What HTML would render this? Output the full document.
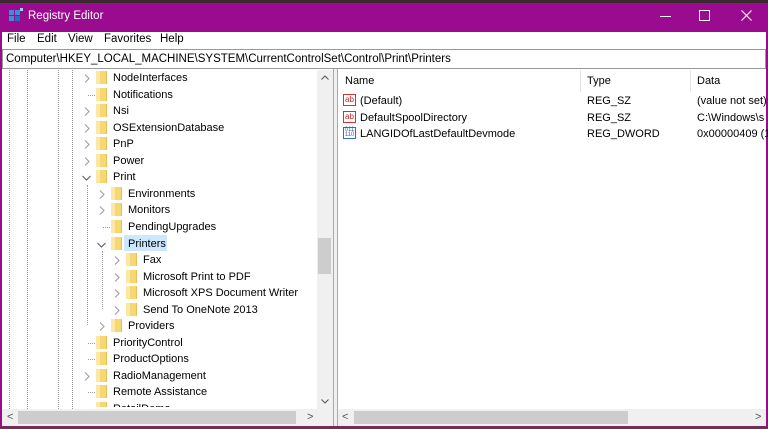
<!DOCTYPE html>
<html><head><meta charset="utf-8"><style>
*{margin:0;padding:0;box-sizing:border-box}
body{width:768px;height:429px;overflow:hidden;background:#fff;font-family:"Liberation Sans",sans-serif;font-size:11px;color:#000;position:relative}
.a{position:absolute}
.t{position:absolute;white-space:nowrap;line-height:14px}
.fold{position:absolute;width:11px;height:13px;background:#f7d774;border-right:1px solid #e6c052}
.fold:before{content:"";position:absolute;left:0;top:0;width:4px;height:13px;background:#fce7a4}
.chev{position:absolute}
.dot{position:absolute;width:0;border-left:1px dotted #999}
</style></head><body>
<div class="a" style="left:0;top:0;width:768px;height:3px;background:#3a2a30"></div>
<div class="a" style="left:0;top:3px;width:768px;height:29px;background:#9b0b90"></div>
<div class="a" style="left:9px;top:10px;width:5px;height:5px;background:#3b8fd6"></div>
<div class="a" style="left:15px;top:10px;width:5px;height:5px;background:#3b8fd6"></div>
<div class="a" style="left:9px;top:16px;width:5px;height:5px;background:#3b8fd6"></div>
<div class="a" style="left:15px;top:16px;width:5px;height:5px;background:#1e6fc0"></div>
<div class="a" style="left:20px;top:8px;width:3px;height:3px;background:#9fd2f5"></div>
<div class="t" style="left:28px;top:9px;color:#fff;font-size:11.5px">Registry Editor</div>
<div class="a" style="left:660px;top:16px;width:11px;height:1px;background:#fff"></div>
<div class="a" style="left:699px;top:10px;width:11px;height:11px;border:1px solid #fff"></div>
<svg class="a" style="left:741px;top:10px" width="11" height="11"><path d="M0.5 0.5L10.5 10.5M10.5 0.5L0.5 10.5" stroke="#fff" stroke-width="1.2"/></svg>
<div class="a" style="left:0;top:32px;width:2px;height:397px;background:#9b0b90"></div>
<div class="a" style="left:766px;top:32px;width:2px;height:397px;background:#9b0b90"></div>
<div class="a" style="left:0;top:426px;width:768px;height:3px;background:#7a2a5a"></div>
<div class="t" style="left:7px;top:32px;font-size:11.5px">File</div>
<div class="t" style="left:37px;top:32px;font-size:11.5px">Edit</div>
<div class="t" style="left:68px;top:32px;font-size:11.5px">View</div>
<div class="t" style="left:104px;top:32px;font-size:11.5px">Favorites</div>
<div class="t" style="left:160px;top:32px;font-size:11.5px">Help</div>
<div class="a" style="left:2px;top:49px;width:764px;height:20px;border:1px solid #999;background:#fff"></div>
<div class="t" style="left:6px;top:52px;font-size:11.5px">Computer\HKEY_LOCAL_MACHINE\SYSTEM\CurrentControlSet\Control\Print\Printers</div>
<div class="a" style="left:2px;top:69px;width:332px;height:357px;border-right:1px solid #ccc"></div>
<div class="dot" style="left:9px;top:70px;height:339px"></div>
<div class="dot" style="left:27px;top:70px;height:339px"></div>
<div class="dot" style="left:58px;top:70px;height:339px"></div>
<div class="dot" style="left:72px;top:70px;height:339px"></div>
<div class="dot" style="left:87px;top:185px;height:140px"></div>
<div class="dot" style="left:102px;top:251px;height:58px"></div>
<div class="a" style="left:124px;top:235px;width:43px;height:16px;background:#cce8ff"></div>
<div id="tree"></div>
<div class="a" style="left:317px;top:70px;width:16px;height:339px;background:#f0f0f0"></div>
<div class="a" style="left:318px;top:238px;width:13px;height:36px;background:#cdcdcd"></div>
<svg class="a" style="left:321px;top:75px" width="8" height="5"><path d="M0.5 4.5L4 1L7.5 4.5" stroke="#555" fill="none"/></svg>
<svg class="a" style="left:321px;top:399px" width="8" height="5"><path d="M0.5 0.5L4 4L7.5 0.5" stroke="#555" fill="none"/></svg>
<div class="a" style="left:2px;top:409px;width:331px;height:17px;background:#f0f0f0"></div>
<div class="a" style="left:18px;top:411px;width:278px;height:13px;background:#cdcdcd"></div>
<div class="t" style="left:7px;top:410px;color:#555">&lt;</div>
<div class="t" style="left:307px;top:410px;color:#555">&gt;</div>
<div class="a" style="left:333px;top:69px;width:5px;height:357px;background:#f0f0f0;border-left:1px solid #aaa;border-right:1px solid #aaa"></div>
<div class="t" style="left:345px;top:74px">Name</div>
<div class="t" style="left:587px;top:74px">Type</div>
<div class="t" style="left:697px;top:74px">Data</div>
<div class="a" style="left:580px;top:70px;width:1px;height:22px;background:#e5e5e5"></div>
<div class="a" style="left:690px;top:70px;width:1px;height:22px;background:#e5e5e5"></div>
<div class="a" style="left:343px;top:94px;width:13px;height:12px;border:1px solid #c33;background:#fff;font-size:8px;color:#c22;line-height:9px;text-align:center">ab</div>
<div class="a" style="left:343px;top:111px;width:13px;height:12px;border:1px solid #c33;background:#fff;font-size:8px;color:#c22;line-height:9px;text-align:center">ab</div>
<div class="a" style="left:343px;top:127px;width:13px;height:12px;border:1px solid #36c;background:#fff;font-size:6px;color:#36c;line-height:5px;text-align:center">011<br>110</div>
<div class="t" style="left:360px;top:94px">(Default)</div>
<div class="t" style="left:360px;top:111px">DefaultSpoolDirectory</div>
<div class="t" style="left:360px;top:127px">LANGIDOfLastDefaultDevmode</div>
<div class="t" style="left:587px;top:94px">REG_SZ</div>
<div class="t" style="left:587px;top:111px">REG_SZ</div>
<div class="t" style="left:587px;top:127px">REG_DWORD</div>
<div class="t" style="left:697px;top:94px">(value not set)</div>
<div class="t" style="left:697px;top:111px">C:\Windows\s</div>
<div class="t" style="left:697px;top:127px">0x00000409 (10</div>
<div class="a" style="left:338px;top:409px;width:428px;height:17px;background:#f0f0f0"></div>
<div class="a" style="left:354px;top:411px;width:274px;height:13px;background:#cdcdcd"></div>
<div class="t" style="left:342px;top:410px;color:#555">&lt;</div>
<div class="t" style="left:755px;top:410px;color:#555">&gt;</div>
<script>
var rows=[[1,'>','NodeInterfaces'],[1,'','Notifications'],[1,'>','Nsi'],[1,'>','OSExtensionDatabase'],[1,'>','PnP'],[1,'>','Power'],[1,'v','Print'],[2,'>','Environments'],[2,'>','Monitors'],[2,'','PendingUpgrades'],[2,'v','Printers'],[3,'>','Fax'],[3,'>','Microsoft Print to PDF'],[3,'>','Microsoft XPS Document Writer'],[3,'>','Send To OneNote 2013'],[2,'>','Providers'],[1,'','PriorityControl'],[1,'','ProductOptions'],[1,'>','RadioManagement'],[1,'','Remote Assistance'],[1,'','RetailDemo']];
var h='';rows.forEach(function(r,i){var y=70+i*16.55;var o=(r[0]-1)*15;
if(r[1]=='>')h+='<svg class="chev" style="left:'+(84+o)+'px;top:'+(y+4)+'px" width="6" height="9"><path d="M1 0.5L5 4.5L1 8.5" stroke="#999" fill="none"/></svg>';
else if(r[1]=='v')h+='<svg class="chev" style="left:'+(82+o)+'px;top:'+(y+6)+'px" width="9" height="6"><path d="M0.5 1L4.5 5L8.5 1" stroke="#555" fill="none"/></svg>';
else h+='<div class="a" style="left:'+(88+o)+'px;top:'+(y+8)+'px;width:7px;border-top:1px dotted #999"></div>';
h+='<div class="fold" style="left:'+(96+o)+'px;top:'+(y+1)+'px"></div><div class="t" style="left:'+(113+o)+'px;top:'+(y+1)+'px">'+r[2]+'</div>';});
document.getElementById('tree').innerHTML=h;
</script>
<div class="a" style="left:84px;top:407px;width:232px;height:2px;background:#fff"></div>
</body></html>
